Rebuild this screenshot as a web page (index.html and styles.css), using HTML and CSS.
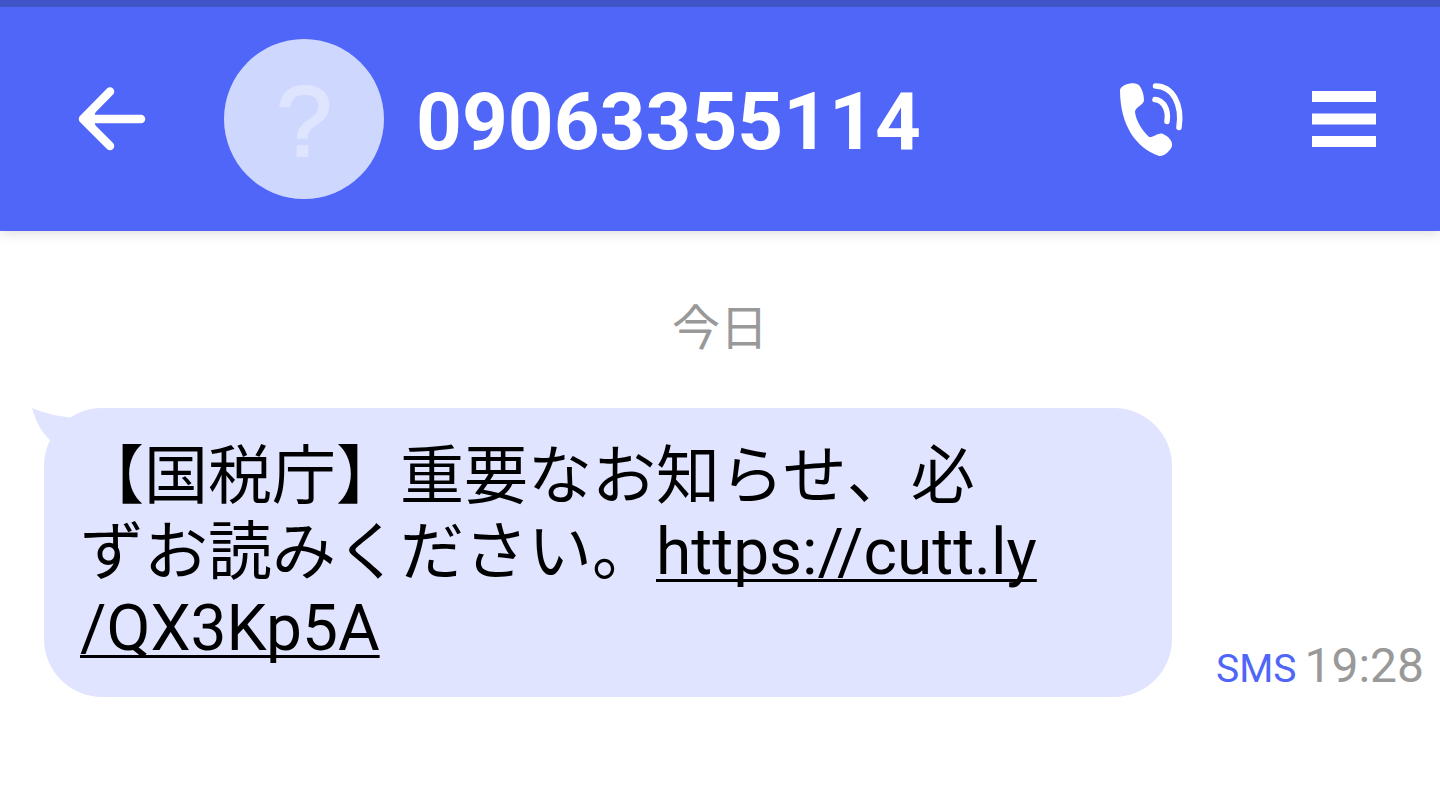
FILE: index.html
```html
<!DOCTYPE html>
<html lang="ja">
<head>
<meta charset="utf-8">
<meta name="viewport" content="width=device-width, initial-scale=1">
<title>09063355114</title>
<link rel="stylesheet" href="styles.css">
</head>
<body>
<header class="bar">
  <button class="icon-btn back" aria-label="Back">
    <svg width="80" height="80" viewBox="0 0 80 80" fill="none" stroke="#fff" stroke-width="8.500" stroke-linecap="round" stroke-linejoin="round"><path d="M38 12.500 11 40l27 27M11 40h58"/><path fill="#fff" stroke="none" d="M12 40l12-10-2 10 2 10z"/></svg>
  </button>
  <div class="avatar">?</div>
  <h1 class="number">09063355114</h1>
  <button class="icon-btn call" aria-label="Call">
    <svg width="80" height="80" viewBox="0 0 80 80"><path fill="#fff" d="M8 11C9 6 20 3 25 5c4 1 7 10 7 16 0 5-9 7-9 12 1 9 7 18 14 25 4 1 10-5 14-3 5 2 10 7 9 12-1 4-8 11-13 10C24 69 8 46 8 11z"/><path d="M43 20.500c8 1 14 9 12 22M43.500 7c17 0 27 18 23.500 41.500" fill="none" stroke="#fff" stroke-width="5.500" stroke-linecap="round"/></svg>
  </button>
  <button class="icon-btn menu" aria-label="Menu">
    <svg width="80" height="80" viewBox="0 0 80 80"><path fill="#fff" d="M8 12h64v11H8zM8 34.500h64v11H8zM8 57h64v11H8z"/></svg>
  </button>
</header>
<main class="thread">
  <p class="day">今日</p>
  <div class="message">
    <div class="bubble">
      <svg class="tail" width="48" height="40" viewBox="0 0 48 40" aria-hidden="true"><path fill="#e0e4ff" d="M0 0c12 5 24 8 38 9.500L46 20 19 34 18 32C10 25 4 14 0 0z"/></svg>
      <p class="text">【国税庁】重要なお知らせ、必<br>ずお読みください。<a class="link" href="#">https://cutt.ly<br>/QX3Kp5A</a></p>
    </div>
    <div class="meta"><span class="kind">SMS</span><time class="time">19:28</time></div>
  </div>
</main>
</body>
</html>
```
FILE: styles.css
```css
* { box-sizing: border-box; }
body {
  margin: 0;
  background: #fff;
  font-family: Roboto, "Noto Sans CJK JP", sans-serif;
}
.bar {
  display: flex;
  align-items: center;
  padding: 32px 56px 32px 72px;
  border-top: 7px solid #4054c8;
  background: #4f66f8;
  box-shadow: 0 2px 12px rgba(0, 0, 0, 0.14);
}
.icon-btn {
  flex: none;
  width: 80px;
  height: 80px;
  padding: 0;
  border: 0;
  background: none;
}
.icon-btn svg { display: block; }
.avatar {
  flex: none;
  width: 160px;
  height: 160px;
  margin-left: 72px;
  border-radius: 50%;
  background: #ced8ff;
  color: #dfe4ff;
  font-family: "Liberation Sans", sans-serif;
  font-size: 100px;
  line-height: 164px;
  text-align: center;
  -webkit-text-stroke: 2px #dfe4ff;
}
.number {
  flex: 1;
  margin: 0 0 0 32px;
  padding-top: 6px;
  color: #fff;
  font-size: 80px;
  font-weight: 700;
  line-height: 96px;
}
.call { margin-right: 112px; }
.thread { padding: 62px 16px 48px 44px; }
.day {
  margin: 0 28px 43px 0;
  color: #999;
  font-size: 48px;
  line-height: 72px;
  text-align: center;
}
.message { display: flex; align-items: flex-end; gap: 44px; }
.bubble {
  position: relative;
  flex: 1;
  padding: 31px 36px 30px;
  border-radius: 58px;
  background: #e0e4ff;
}
.tail { position: absolute; top: 0; left: -12px; }
.text {
  margin: 0;
  color: #000;
  font-size: 64px;
  line-height: 76px;
}
.link {
  color: inherit;
  text-decoration: underline;
  text-decoration-thickness: 3px;
  text-decoration-skip-ink: none;
  text-underline-offset: 5px;
}
.meta {
  display: flex;
  flex: none;
  align-items: baseline;
  gap: 8px;
  font-size: 48px;
  line-height: 56px;
}
.kind { color: #4f66f8; font-size: 39px; }
.time { color: #999; }
```
